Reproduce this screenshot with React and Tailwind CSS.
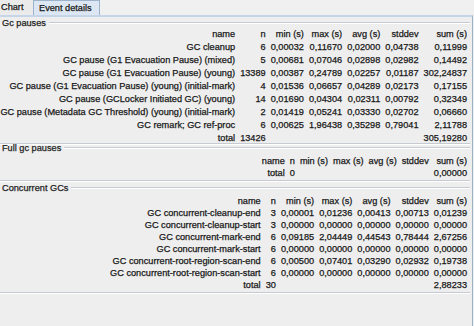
import React from "react";

const headers = ["name", "n", "min (s)", "max (s)", "avg (s)", "stddev", "sum (s)"];

const sections = [
    {
        title: "Gc pauses",
        rows: [
            ["GC cleanup", "6", "0,00032", "0,11670", "0,02000", "0,04738", "0,11999"],
            ["GC pause (G1 Evacuation Pause) (mixed)", "5", "0,00681", "0,07046", "0,02898", "0,02982", "0,14492"],
            ["GC pause (G1 Evacuation Pause) (young)", "13389", "0,00387", "0,24789", "0,02257", "0,01187", "302,24837"],
            ["GC pause (G1 Evacuation Pause) (young) (initial-mark)", "4", "0,01536", "0,06657", "0,04289", "0,02173", "0,17155"],
            ["GC pause (GCLocker Initiated GC) (young)", "14", "0,01690", "0,04304", "0,02311", "0,00792", "0,32349"],
            ["GC pause (Metadata GC Threshold) (young) (initial-mark)", "2", "0,01419", "0,05241", "0,03330", "0,02702", "0,06660"],
            ["GC remark; GC ref-proc", "6", "0,00625", "1,96438", "0,35298", "0,79041", "2,11788"],
            ["total", "13426", "", "", "", "", "305,19280"],
        ],
        wrap: "pt-[1px]",
        gridTop: "mt-0",
        rowH: "leading-[13px]",
        lineTop: "-mt-[2px]",
    },
    {
        title: "Full gc pauses",
        rows: [["total", "0", "", "", "", "", "0,00000"]],
        wrap: "-mt-[2px]",
        gridTop: "mt-[2px]",
        rowH: "leading-[12px]",
        lineTop: "mt-[1px]",
    },
    {
        title: "Concurrent GCs",
        rows: [
            ["GC concurrent-cleanup-end", "3", "0,00001", "0,01236", "0,00413", "0,00713", "0,01239"],
            ["GC concurrent-cleanup-start", "3", "0,00000", "0,00000", "0,00000", "0,00000", "0,00000"],
            ["GC concurrent-mark-end", "6", "0,09185", "2,04449", "0,44543", "0,78444", "2,67256"],
            ["GC concurrent-mark-start", "6", "0,00000", "0,00000", "0,00000", "0,00000", "0,00000"],
            ["GC concurrent-root-region-scan-end", "6", "0,00500", "0,07401", "0,03290", "0,02932", "0,19738"],
            ["GC concurrent-root-region-scan-start", "6", "0,00000", "0,00000", "0,00000", "0,00000", "0,00000"],
            ["total", "30", "", "", "", "", "2,88233"],
        ],
        wrap: "mt-[1px]",
        gridTop: "mt-[2px]",
        rowH: "leading-[12px]",
        lineTop: "mt-[1px]",
    },
];

function Section({ section }) {
    return (
        <div className={section.wrap}>
            {/* titled border header */}
            <div className="flex items-center h-[10px] leading-[10px]">
                <span className="pl-[2px] pr-[3px] text-[#222]">{section.title}</span>
                <div className="flex-1 mr-[2px] border-t border-b border-t-[#c6cbd1] border-b-white" />
            </div>

            <div className={`flex justify-end pr-[5px] ${section.gridTop}`}>
                <div className={`grid grid-cols-[repeat(7,auto)] gap-x-[5px] ${section.rowH}`}>
                    {headers.map((h) => (
                        <div key={h} className="text-right whitespace-nowrap">
                            {h}
                        </div>
                    ))}
                    {section.rows.map((row, i) =>
                        row.map((cell, j) => (
                            <div key={i + "-" + j} className="text-right whitespace-nowrap">
                                {cell}
                            </div>
                        ))
                    )}
                </div>
            </div>

            {/* bottom of the etched border */}
            <div className={`mr-[2px] border-t border-b border-t-[#c6cbd1] border-b-white ${section.lineTop}`} />
        </div>
    );
}

export default function App() {
    return (
        <div className="w-[474px] h-[326px] overflow-hidden bg-[#eeeeee] text-[#111] text-[9.2px] [-webkit-text-stroke:0.25px_#222] font-['Liberation_Sans',Arial,sans-serif]">
            {/* Tab strip */}
            <div className="flex h-[15px] bg-[#f0f0f0]">
                <div className="w-[33px] h-[15px] leading-[15px] bg-[#ebebeb] pl-[1px]">Chart</div>
                <div className="w-[67px] h-[15px] leading-[14px] bg-[#dce7f3] border border-b-0 border-[#9db2cb] pl-[5px]">
                    Event details
                </div>
            </div>

            {/* Content panel */}
            <div className="h-[311px] border-t-2 border-r border-t-[#c6d6e8] border-r-[#9fb1c7] mr-[1px]">
                {sections.map((s) => (
                    <Section key={s.title} section={s} />
                ))}
            </div>
        </div>
    );
}
